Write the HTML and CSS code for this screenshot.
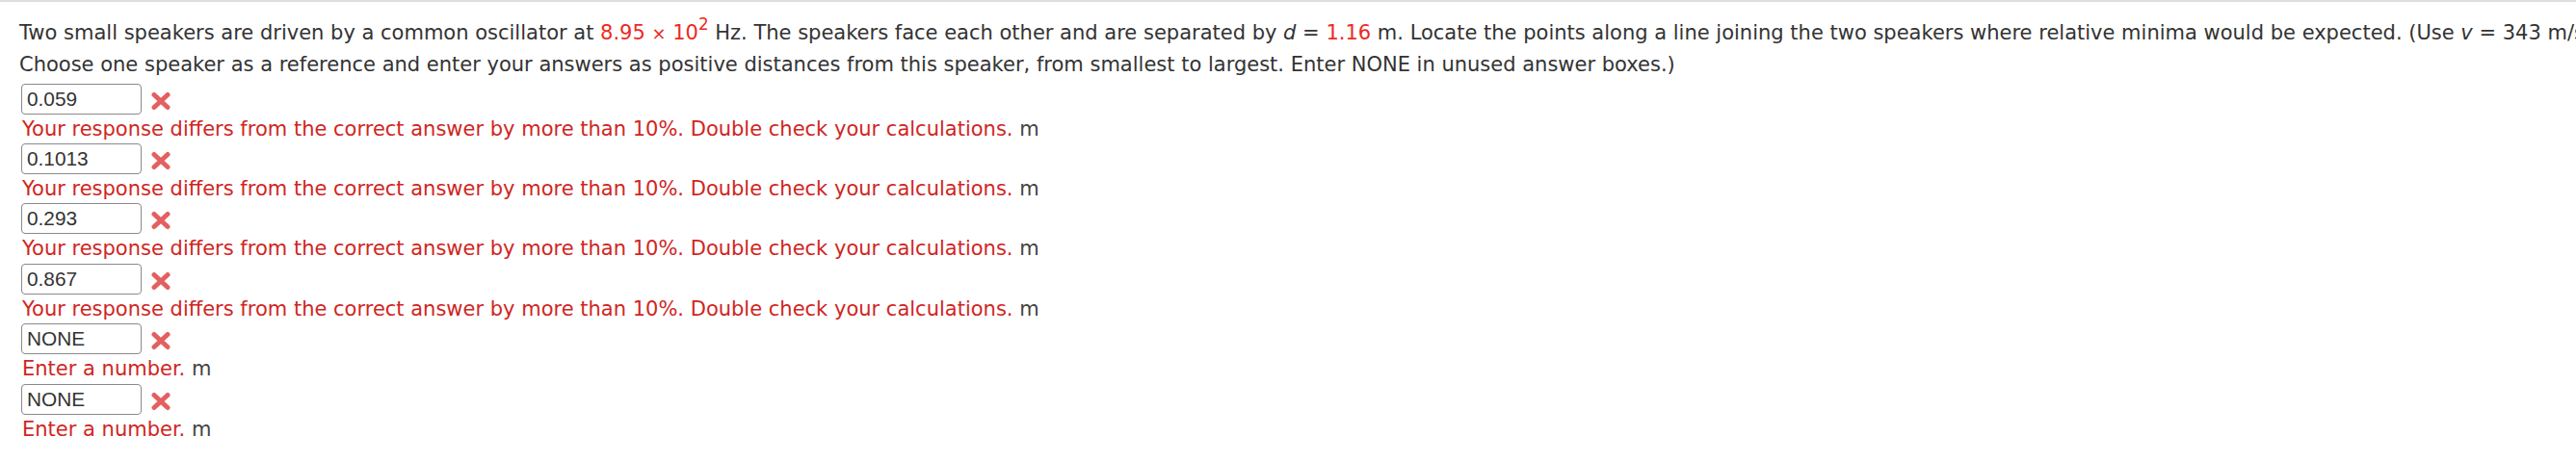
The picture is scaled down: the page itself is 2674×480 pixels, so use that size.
FILE: index.html
```html
<!DOCTYPE html>
<html lang="en">
<head>
<meta charset="utf-8">
<title>Speakers question</title>
<link rel="stylesheet" href="styles.css">
</head>
<body>
<div class="question">
  <p class="prompt">Two small speakers are driven by a common oscillator at <span class="given">8.95 <span class="times">&times;</span> 10<sup>2</sup></span> Hz. The speakers face each other and are separated by <i>d</i> = <span class="given">1.16</span> m. Locate the points along a line joining the two speakers where relative minima would be expected. (Use <i>v</i> = 343 m/s.)<br>Choose one speaker as a reference and enter your answers as positive distances from this speaker, from smallest to largest. Enter NONE in unused answer boxes.)</p>

  <div class="answers">
    <div class="answer">
      <div class="entry"><input class="box" type="text" value="0.059" readonly><svg class="wrong" viewBox="0 0 24 20" width="24" height="20"><path d="M5 3.5 L19 16.5 M19 3.5 L5 16.5"/></svg></div>
      <div class="feedback"><span class="err">Your response differs from the correct answer by more than 10%. Double check your calculations.</span> m</div>
    </div>
    <div class="answer">
      <div class="entry"><input class="box" type="text" value="0.1013" readonly><svg class="wrong" viewBox="0 0 24 20" width="24" height="20"><path d="M5 3.5 L19 16.5 M19 3.5 L5 16.5"/></svg></div>
      <div class="feedback"><span class="err">Your response differs from the correct answer by more than 10%. Double check your calculations.</span> m</div>
    </div>
    <div class="answer">
      <div class="entry"><input class="box" type="text" value="0.293" readonly><svg class="wrong" viewBox="0 0 24 20" width="24" height="20"><path d="M5 3.5 L19 16.5 M19 3.5 L5 16.5"/></svg></div>
      <div class="feedback"><span class="err">Your response differs from the correct answer by more than 10%. Double check your calculations.</span> m</div>
    </div>
    <div class="answer">
      <div class="entry"><input class="box" type="text" value="0.867" readonly><svg class="wrong" viewBox="0 0 24 20" width="24" height="20"><path d="M5 3.5 L19 16.5 M19 3.5 L5 16.5"/></svg></div>
      <div class="feedback"><span class="err">Your response differs from the correct answer by more than 10%. Double check your calculations.</span> m</div>
    </div>
    <div class="answer">
      <div class="entry"><input class="box" type="text" value="NONE" readonly><svg class="wrong" viewBox="0 0 24 20" width="24" height="20"><path d="M5 3.5 L19 16.5 M19 3.5 L5 16.5"/></svg></div>
      <div class="feedback"><span class="err">Enter a number.</span> m</div>
    </div>
    <div class="answer">
      <div class="entry"><input class="box" type="text" value="NONE" readonly><svg class="wrong" viewBox="0 0 24 20" width="24" height="20"><path d="M5 3.5 L19 16.5 M19 3.5 L5 16.5"/></svg></div>
      <div class="feedback"><span class="err">Enter a number.</span> m</div>
    </div>
  </div>
</div>
</body>
</html>
```

FILE: styles.css
```css
html, body {
  margin: 0;
  padding: 0;
  background: #ffffff;
  overflow: hidden;
}

.question {
  border-top: 2px solid #dddddd;
  padding: 16px 0 0 20px;
  font-family: "DejaVu Sans", Verdana, sans-serif;
  font-size: 21px;
  color: #333333;
}

.prompt {
  margin: 0;
  line-height: 32.3px;
  white-space: nowrap;
}

.given {
  color: #ec2a22;
}

.times {
  font-size: 0.85em;
}

.prompt sup {
  font-size: 0.8em;
  line-height: 0;
  vertical-align: 0.6em;
}

.answers {
  margin-top: 3px;
}

.answer {
  display: flex;
  flex-direction: column;
}

.entry {
  display: flex;
  align-items: center;
  height: 32px;
  gap: 8px;
}

.box {
  box-sizing: border-box;
  width: 125px;
  height: 32px;
  margin: 0 0 0 2px;
  padding: 0 5px;
  border: 1px solid #8a8a8a;
  border-radius: 4px;
  font-family: "Liberation Sans", Arial, sans-serif;
  font-size: 20.8px;
  color: #333333;
  background: #ffffff;
  outline: none;
}

.wrong {
  margin-top: 4px;
}

.wrong path {
  fill: none;
  stroke: #e45f5f;
  stroke-width: 5;
  stroke-linecap: round;
}

.feedback {
  line-height: 30.4px;
  margin-left: 3px;
  color: #444444;
}

.err {
  color: #d0261f;
}
```
